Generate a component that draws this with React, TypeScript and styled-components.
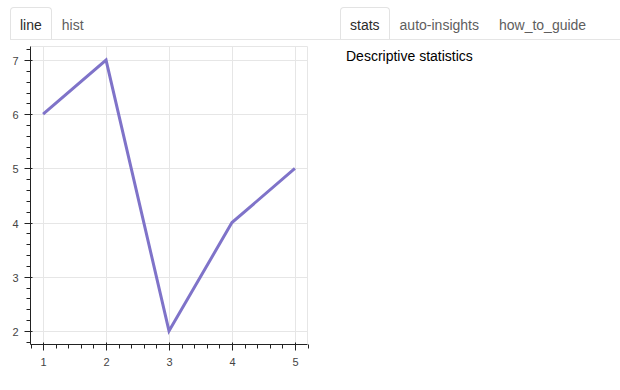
import React from "react";
import styled, { createGlobalStyle } from "styled-components";

const Global = createGlobalStyle`
  html, body { margin: 0; padding: 0; background: #fff; }
  body { font-family: "Liberation Sans", Arial, Helvetica, sans-serif; }
`;

const Page = styled.div`
  display: flex;
  align-items: flex-start;
  width: 620px;
  height: 390px;
  overflow: hidden;
`;

const Panel = styled.section<{ $width: number; $offset: number }>`
  display: flex;
  flex-direction: column;
  width: ${(p) => p.$width}px;
  margin-left: ${(p) => p.$offset}px;
`;

const TabBar = styled.div`
  display: flex;
  align-items: flex-end;
  height: 40px;
  padding-top: 7px;
  box-sizing: border-box;
  border-bottom: 1px solid #e5e5e5;
`;

const Tab = styled.div<{ $active?: boolean }>`
  box-sizing: border-box;
  height: 32px;
  padding: 9px 9px 0;
  font-size: 14px;
  line-height: 16px;
  white-space: nowrap;
  color: ${(p) => (p.$active ? "#2b2b2b" : "#5e5e5e")};
  border: 1px solid ${(p) => (p.$active ? "#e3e3e3" : "transparent")};
  border-bottom: none;
  border-radius: 4px 4px 0 0;
  background: #fff;
`;

const Content = styled.div`
  padding: 7px 0 0 6px;
  font-size: 14px;
  line-height: 18px;
  color: #000;
`;

const ChartSvg = styled.svg`
  display: block;
`;

const X0 = 30.5;
const X1 = 307.5;
const Y0 = 46.5;
const Y1 = 344.5;
const XMIN = 0.8;
const XMAX = 5.2;
const YMIN = 1.75;
const YMAX = 7.25;

const sx = (x: number) => X0 + ((x - XMIN) / (XMAX - XMIN)) * (X1 - X0);
const sy = (y: number) => Y1 - ((y - YMIN) / (YMAX - YMIN)) * (Y1 - Y0);

const data: [number, number][] = [
  [1, 6],
  [2, 7],
  [3, 2],
  [4, 4],
  [5, 5],
];

const range = (a: number, b: number, step: number) => {
  const out: number[] = [];
  for (let v = a; v <= b + 1e-9; v += step) out.push(Math.round(v * 100) / 100);
  return out;
};

const Chart: React.FC = () => {
  const xMajor = [1, 2, 3, 4, 5];
  const yMajor = [2, 3, 4, 5, 6, 7];
  const xMinor = range(0.8, 5.2, 0.2);
  const yMinor = range(1.8, 7.2, 0.2);
  const grid = "#e6e6e6";
  const axis = "#222";
  const label = "#444";
  const pts = data.map(([x, y]) => `${sx(x)},${sy(y)}`).join(" ");
  return (
    <ChartSvg width={320} height={350} viewBox="10 40 320 350">
      {xMajor.map((x) => (
        <line key={`gx${x}`} x1={Math.round(sx(x)) + 0.5} x2={Math.round(sx(x)) + 0.5} y1={Y0} y2={Y1} stroke={grid} strokeWidth={1} />
      ))}
      {yMajor.map((y) => (
        <line key={`gy${y}`} x1={X0} x2={X1} y1={Math.round(sy(y)) + 0.5} y2={Math.round(sy(y)) + 0.5} stroke={grid} strokeWidth={1} />
      ))}
      <line x1={X0} x2={X1} y1={Y0} y2={Y0} stroke={grid} />
      <line x1={X1} x2={X1} y1={Y0} y2={Y1} stroke={grid} />
      <polyline points={pts} fill="none" stroke="#7f73c9" strokeWidth={3} strokeLinejoin="miter" />
      <line x1={X0} x2={X0} y1={Y0} y2={Y1} stroke={axis} strokeWidth={1} />
      {yMinor.map((y) => (
        <line key={`ym${y}`} x1={X0 - 4} x2={X0} y1={Math.round(sy(y)) + 0.5} y2={Math.round(sy(y)) + 0.5} stroke={axis} />
      ))}
      {yMajor.map((y) => (
        <line key={`yM${y}`} x1={X0 - 6} x2={X0 + 2} y1={Math.round(sy(y)) + 0.5} y2={Math.round(sy(y)) + 0.5} stroke={axis} />
      ))}
      {yMajor.map((y) => (
        <text
          key={`yl${y}`}
          x={18.5}
          y={Math.round(sy(y)) + 4.5}
          textAnchor="end"
          fontSize={11}
          fill={label}
          fontFamily='"Liberation Sans", Arial, sans-serif'
        >
          {y}
        </text>
      ))}
      <line x1={X0} x2={X1} y1={Y1} y2={Y1} stroke={axis} strokeWidth={1} />
      {xMinor.map((x) => (
        <line key={`xm${x}`} x1={Math.round(sx(x)) + 0.5} x2={Math.round(sx(x)) + 0.5} y1={Y1} y2={Y1 + 4} stroke={axis} />
      ))}
      {xMajor.map((x) => (
        <line key={`xM${x}`} x1={Math.round(sx(x)) + 0.5} x2={Math.round(sx(x)) + 0.5} y1={Y1 - 2} y2={Y1 + 6} stroke={axis} />
      ))}
      {xMajor.map((x) => (
        <text
          key={`xl${x}`}
          x={Math.round(sx(x)) + 0.5}
          y={365.5}
          textAnchor="middle"
          fontSize={11}
          fill={label}
          fontFamily='"Liberation Sans", Arial, sans-serif'
        >
          {x}
        </text>
      ))}
    </ChartSvg>
  );
};

export default function App() {
  return (
    <>
      <Global />
      <Page>
        <Panel $width={330} $offset={10}>
          <TabBar>
            <Tab $active>line</Tab>
            <Tab>hist</Tab>
          </TabBar>
          <Chart />
        </Panel>
        <Panel $width={280} $offset={0}>
          <TabBar>
            <Tab $active>stats</Tab>
            <Tab>auto-insights</Tab>
            <Tab>how_to_guide</Tab>
          </TabBar>
          <Content>Descriptive statistics</Content>
        </Panel>
      </Page>
    </>
  );
}
